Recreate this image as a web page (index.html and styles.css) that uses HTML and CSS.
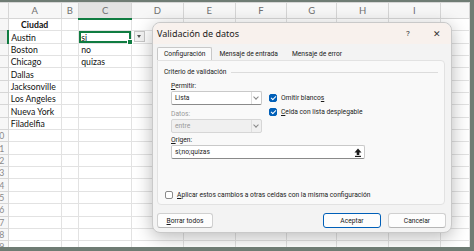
FILE: index.html
```html
<!DOCTYPE html>
<html lang="es">
<head>
    <meta charset="UTF-8">
    <title>Validación de datos</title>
    <link rel="stylesheet" href="styles.css">
</head>
<body>

<div class="frame">
    <!-- Hoja de cálculo -->
    <table class="sheet">
        <colgroup>
            <col class="w-head"><col class="w-a"><col class="w-b"><col class="w-c"><col class="w-d"><col class="w-e">
            <col class="w-f"><col class="w-g"><col class="w-h"><col class="w-i"><col class="w-j">
        </colgroup>
        <tr class="cols">
            <th class="corner"></th><th>A</th><th>B</th><th class="sel">C</th><th>D</th><th>E</th>
            <th>F</th><th>G</th><th>H</th><th>I</th><th></th>
        </tr>
        <tr><th></th><td class="bold">Ciudad</td><td></td><td></td><td></td><td></td><td></td><td></td><td></td><td></td><td></td></tr>
        <tr><th class="sel"></th><td>Austin</td><td></td><td class="active">si<span class="handle"></span><span class="dd"></span></td><td></td><td></td><td></td><td></td><td></td><td></td><td></td></tr>
        <tr><th></th><td>Boston</td><td></td><td>no</td><td></td><td></td><td></td><td></td><td></td><td></td><td></td></tr>
        <tr><th></th><td>Chicago</td><td></td><td>quizas</td><td></td><td></td><td></td><td></td><td></td><td></td><td></td></tr>
        <tr><th></th><td>Dallas</td><td></td><td></td><td></td><td></td><td></td><td></td><td></td><td></td><td></td></tr>
        <tr><th></th><td>Jacksonville</td><td></td><td></td><td></td><td></td><td></td><td></td><td></td><td></td><td></td></tr>
        <tr><th></th><td>Los Angeles</td><td></td><td></td><td></td><td></td><td></td><td></td><td></td><td></td><td></td></tr>
        <tr><th></th><td>Nueva York</td><td></td><td></td><td></td><td></td><td></td><td></td><td></td><td></td><td></td></tr>
        <tr><th></th><td>Filadelfia</td><td></td><td></td><td></td><td></td><td></td><td></td><td></td><td></td><td></td></tr>
        <tr><th>10</th><td></td><td></td><td></td><td></td><td></td><td></td><td></td><td></td><td></td><td></td></tr>
        <tr><th>11</th><td></td><td></td><td></td><td></td><td></td><td></td><td></td><td></td><td></td><td></td></tr>
        <tr><th>12</th><td></td><td></td><td></td><td></td><td></td><td></td><td></td><td></td><td></td><td></td></tr>
        <tr><th>13</th><td></td><td></td><td></td><td></td><td></td><td></td><td></td><td></td><td></td><td></td></tr>
        <tr><th>14</th><td></td><td></td><td></td><td></td><td></td><td></td><td></td><td></td><td></td><td></td></tr>
        <tr><th>15</th><td></td><td></td><td></td><td></td><td></td><td></td><td></td><td></td><td></td><td></td></tr>
        <tr><th>16</th><td></td><td></td><td></td><td></td><td></td><td></td><td></td><td></td><td></td><td></td></tr>
        <tr><th>17</th><td></td><td></td><td></td><td></td><td></td><td></td><td></td><td></td><td></td><td></td></tr>
        <tr><th>18</th><td></td><td></td><td></td><td></td><td></td><td></td><td></td><td></td><td></td><td></td></tr>
        <tr><th>19</th><td></td><td></td><td></td><td></td><td></td><td></td><td></td><td></td><td></td><td></td></tr>
    </table>

    <!-- Cuadro de diálogo -->
    <div class="dialog">
        <div class="titlebar">
            <span class="title">Validación de datos</span>
            <span class="help">?</span>
            <span class="close">✕</span>
        </div>

        <div class="tabs">
            <span class="tab active">Configuración</span>
            <span class="tab">Mensaje de entrada</span>
            <span class="tab">Mensaje de error</span>
        </div>

        <div class="panel">
            <div class="group-title">Criterio de validación</div>

            <div class="criteria">
                <div class="field">
                    <label><u>P</u>ermitir:</label>
                    <div class="select">Lista<span class="chev"></span></div>
                    <label class="disabled">Datos:</label>
                    <div class="select disabled last">entre<span class="chev"></span></div>
                </div>
                <div class="checks">
                    <div class="check"><span class="box on"></span><span>Omitir blanco<u>s</u></span></div>
                    <div class="check"><span class="box on"></span><span><u>C</u>elda con lista desplegable</span></div>
                </div>
            </div>

            <label class="origin-label"><u>O</u>rigen:</label>
            <div class="origin">
                <span>si;no;quizas</span>
                <svg class="pick" width="8" height="9" viewBox="0 0 8 9">
                    <path d="M4 0.5 L7.5 4.5 H5.3 V7 H2.7 V4.5 H0.5 Z" fill="#1b1b1b"/>
                    <rect x="1" y="7.8" width="6" height="1.2" fill="#1b1b1b"/>
                </svg>
            </div>

            <div class="check apply"><span class="box"></span><span><u>A</u>plicar estos cambios a otras celdas con la misma configuración</span></div>
        </div>

        <div class="footer">
            <span class="btn"><span><u>B</u>orrar todos</span></span>
            <span class="spacer"></span>
            <span class="btn primary">Aceptar</span>
            <span class="btn">Cancelar</span>
        </div>
    </div>
</div>

</body>
</html>
```

FILE: styles.css
```css
/* General */
body {
    margin: 0;
    padding: 2px 4px 4px 0;
    background-color: #6f7c74;
}

.frame {
    position: relative;
    width: 470px;
    height: 245px;
    overflow: hidden;
    background: white;
}

/* Hoja */
.sheet {
    table-layout: fixed;
    border-collapse: collapse;
    margin-left: -12px;
    font-family: 'Lato', sans-serif;
    font-size: 8.7px;
    color: #111;
}

.w-head { width: 20px; }
.w-a { width: 53px; }
.w-b { width: 18px; }
.w-c { width: 54px; }
.w-d { width: 53px; }
.w-e { width: 54px; }
.w-f { width: 53px; }
.w-g { width: 52px; }
.w-h { width: 53px; }
.w-i { width: 54px; }
.w-j { width: 30px; }

.sheet tr {
    height: 12.35px;
}

.sheet tr.cols {
    height: 16px;
}

.sheet td {
    border: 1px solid #e2e2e2;
    padding: 0 2px;
    white-space: nowrap;
    overflow: visible;
    line-height: 11px;
}

.sheet th {
    background: #f7f7f7;
    border: 1px solid #d6d6d6;
    font-weight: normal;
    color: #8a8a8a;
    padding: 0 0 0 2px;
    line-height: 11px;
}

.sheet tr.cols th {
    font-size: 9.5px;
    color: #707070;
    padding: 0;
}

.sheet th.sel {
    background: #e3e3e3;
    color: #333;
}

.sheet tr.cols th.sel {
    border-bottom: 2px solid #107c41;
}

.sheet tr th.sel:first-child {
    border-right: 2px solid #107c41;
}

.sheet td.bold {
    font-weight: bold;
    text-align: center;
}

.sheet td.active {
    position: relative;
    box-shadow: inset 0 0 0 2px #107c41;
}

.handle {
    position: absolute;
    right: -2px;
    bottom: -2px;
    width: 4px;
    height: 4px;
    background: #107c41;
    border: 1px solid white;
}

.dd {
    position: absolute;
    left: 100%;
    top: 0;
    margin-left: 3px;
    width: 9px;
    height: 9px;
    background: #f3f3f3;
    border: 1px solid #c8c8c8;
}

.dd::after {
    content: '';
    position: absolute;
    left: 2px;
    top: 3px;
    border-left: 2.5px solid transparent;
    border-right: 2.5px solid transparent;
    border-top: 3px solid #555;
}

/* Diálogo */
.dialog {
    position: absolute;
    left: 152px;
    top: 20px;
    width: 300px;
    height: 211px;
    box-sizing: border-box;
    background: #f3f3f3;
    border: 1px solid #c9c9c9;
    border-radius: 8px;
    box-shadow: 0 4px 18px rgba(0,0,0,0.28);
    font-family: 'Roboto', sans-serif;
    font-size: 6.7px;
    line-height: 10px;
    color: #1b1b1b;
    display: flex;
    flex-direction: column;
}

.titlebar {
    height: 21px;
    flex-shrink: 0;
    display: flex;
    align-items: center;
    padding-left: 4px;
    background: #f8f1ed;
    border-radius: 8px 8px 0 0;
}

.title {
    font-family: 'Noto Sans', sans-serif;
    font-size: 9px;
    flex: 1;
}

.help {
    font-size: 8px;
    width: 30px;
    text-align: center;
    color: #333;
}

.close {
    font-size: 9px;
    width: 28px;
    text-align: center;
    color: #333;
}

.tabs {
    display: flex;
    flex-shrink: 0;
    margin-top: 3px;
    padding-left: 4px;
    height: 13px;
}

.tab {
    display: flex;
    align-items: center;
    padding: 0 6px;
    border: 1px solid transparent;
    border-bottom: none;
}

.tab.active {
    background: #fafafa;
    border-color: #c8c8c8;
    border-radius: 2px 2px 0 0;
}

.panel {
    flex-shrink: 0;
    margin: 0 6px 0 4px;
    height: 145px;
    background: #f9f9f9;
    border: 1px solid #e2e2e2;
    border-radius: 0 4px 4px 4px;
    padding: 6px 6px 0 6px;
    box-sizing: border-box;
}

.group-title {
    display: flex;
    align-items: center;
    gap: 5px;
}

.group-title::after {
    content: '';
    flex: 1;
    height: 1px;
    background: #dcdcdc;
}

.criteria {
    display: flex;
    padding-left: 7px;
    margin-top: 4px;
    gap: 7px;
}

.field {
    width: 91px;
    display: flex;
    flex-direction: column;
}

.field label {
    height: 10px;
}

.disabled {
    color: #9a9a9a;
}

.select {
    position: relative;
    height: 14px;
    box-sizing: border-box;
    border: 1px solid #c9c9c9;
    border-bottom-color: #8a8a8a;
    background: white;
    border-radius: 2px;
    padding-left: 3px;
    line-height: 12px;
    margin-bottom: 4px;
}

.select.last {
    margin-bottom: 0;
}

.select.disabled {
    background: #f0f0f0;
    border-color: #d6d6d6;
}

.chev {
    position: absolute;
    right: 0;
    top: 0;
    bottom: 0;
    width: 9px;
    border-left: 1px solid #dedede;
}

.chev::after {
    content: '';
    position: absolute;
    left: 2px;
    top: 3px;
    width: 3px;
    height: 3px;
    border-right: 1px solid #888;
    border-bottom: 1px solid #888;
    transform: rotate(45deg);
}

.checks {
    padding-top: 12px;
    display: flex;
    flex-direction: column;
    gap: 5px;
}

.check {
    display: flex;
    align-items: center;
    gap: 4px;
    height: 9px;
}

.box {
    width: 8px;
    height: 8px;
    flex-shrink: 0;
    box-sizing: border-box;
    border: 1px solid #8a8a8a;
    border-radius: 2px;
    background: white;
    position: relative;
}

.box.on {
    background: #005fb8;
    border-color: #005fb8;
}

.box.on::after {
    content: '';
    position: absolute;
    left: 2px;
    top: 0;
    width: 2px;
    height: 4px;
    border-right: 1px solid white;
    border-bottom: 1px solid white;
    transform: rotate(45deg);
}

.origin-label {
    display: block;
    padding-left: 7px;
    margin-top: 2px;
    height: 10px;
}

.origin {
    margin-left: 7px;
    width: 194px;
    height: 14px;
    box-sizing: border-box;
    border: 1px solid #c9c9c9;
    border-bottom-color: #8a8a8a;
    background: white;
    border-radius: 2px;
    display: flex;
    align-items: center;
    padding: 0 2px 0 3px;
}

.origin span {
    flex: 1;
}

.apply {
    margin-top: 31px;
    margin-left: 1px;
}

.footer {
    display: flex;
    padding: 8px 5px 0 4px;
    gap: 7px;
}

.spacer {
    flex: 1;
}

.btn {
    height: 15px;
    box-sizing: border-box;
    width: 58px;
    border: 1px solid #d0d0d0;
    border-bottom-color: #b5b5b5;
    border-radius: 3px;
    background: #fdfdfd;
    display: flex;
    align-items: center;
    justify-content: center;
}

.btn:first-child {
    width: 56px;
}

.btn.primary {
    border: 1px solid #005fb8;
}
```
